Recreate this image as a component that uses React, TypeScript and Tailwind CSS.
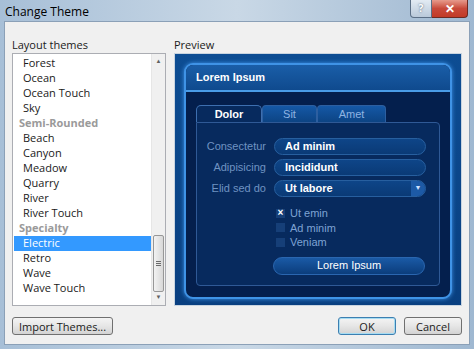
import React from "react";

interface ThemeItem {
  name: string;
  header?: boolean;
  selected?: boolean;
}

const themes: ThemeItem[] = [
  { name: "Forest" },
  { name: "Ocean" },
  { name: "Ocean Touch" },
  { name: "Sky" },
  { name: "Semi-Rounded", header: true },
  { name: "Beach" },
  { name: "Canyon" },
  { name: "Meadow" },
  { name: "Quarry" },
  { name: "River" },
  { name: "River Touch" },
  { name: "Specialty", header: true },
  { name: "Electric", selected: true },
  { name: "Retro" },
  { name: "Wave" },
  { name: "Wave Touch" },
];

const ui = { fontFamily: '"Open Sans", "Noto Sans", sans-serif' };
const mac = { fontFamily: '"Liberation Sans", Arial, sans-serif' };

const WinButton = ({ label, primary }: { label: string; primary?: boolean }) => (
  <button
    className={`h-[18px] rounded-[3px] border text-[11px] leading-none text-[#1a1a1a] bg-gradient-to-b from-[#f4f4f4] via-[#e6e6e6] to-[#d3d3d3] ${
      primary ? "border-[#3c7fb1] shadow-[inset_0_0_0_1px_#a6dcf2]" : "border-[#707070]"
    }`}
    style={ui}
  >
    {label}
  </button>
);

const Field = ({ label, value, dropdown }: { label: string; value: string; dropdown?: boolean }) => (
  <div className="flex items-center h-[17px]">
    <div className="w-[77px] text-right pr-[8px] text-[11px] text-[#6f93c2]">{label}</div>
    <div className="relative w-[152px] h-[17px] rounded-full border border-[#275f9f] bg-gradient-to-b from-[#0e4588] to-[#0a3a76] flex items-center pl-[10px] text-[11px] font-bold text-white">
      {value}
      {dropdown && (
        <div className="absolute right-0 top-0 bottom-0 w-[14px] rounded-r-full bg-[#1d5aa6] flex items-center justify-center text-[7px] text-[#cfe2ff]">
          ▼
        </div>
      )}
    </div>
  </div>
);

const Check = ({ label, checked }: { label: string; checked?: boolean }) => (
  <div className="flex items-center h-[14.5px] pl-[79px]">
    <div className="w-[9px] h-[9px] bg-[#163f78] flex items-center justify-center text-[10px] leading-none text-white font-bold">
      {checked ? "×" : ""}
    </div>
    <span className="ml-[5px] text-[11px] text-[#7ea3d4]">{label}</span>
  </div>
);

export default function App() {
  return (
    <div className="w-[474px] h-[349px] flex flex-col bg-gradient-to-r from-[#a7bfd7] via-[#c9d8e6] to-[#9fb8d1] overflow-hidden">
      {/* title bar */}
      <div className="h-[21px] flex items-start">
        <div className="pl-[5px] pt-[3px] text-[12px] text-black" style={ui}>
          Change Theme
        </div>
        <div className="ml-auto mr-[6px] flex">
          <div className="w-[22px] h-[18px] rounded-bl-[4px] border border-[#5b6f86] border-t-0 bg-gradient-to-b from-[#e3ebf3] to-[#b9c9da] flex items-center justify-center text-[10px] font-bold text-white [text-shadow:0_0_2px_#3b4d63]">
            ?
          </div>
          <div className="w-[36px] h-[18px] rounded-br-[4px] border border-[#6d2a22] border-t-0 border-l-0 bg-gradient-to-b from-[#e69a8c] via-[#c8493a] to-[#c23a26] flex items-center justify-center text-[12px] font-bold text-white">
            ✕
          </div>
        </div>
      </div>

      {/* client area */}
      <div className="mx-[4px] mb-[4px] flex-1 bg-[#f0f0f0] border border-[#8ba0b7] flex flex-col px-[7px] pt-[16px]" style={ui}>
        <div className="flex gap-[8px]">
          {/* layout themes */}
          <div className="w-[154px] flex flex-col">
            <div className="h-[13px] text-[11px] leading-[13px] text-[#1a1a1a] mb-[2px]">Layout themes</div>
            <div className="h-[253px] bg-white border border-[#abadb3] flex">
              <div className="flex-1 pt-[2px] pl-[1px]">
                {themes.map((t) => (
                  <div
                    key={t.name}
                    className={`h-[15px] flex items-center text-[11px] ${
                      t.header
                        ? "pl-[5px] font-bold text-[#9a9a9a]"
                        : t.selected
                        ? "pl-[9px] bg-[#3399ff] text-white"
                        : "pl-[9px] text-[#1a1a1a]"
                    }`}
                  >
                    {t.name}
                  </div>
                ))}
              </div>
              <div className="w-[14px] bg-[#f0f0f0] flex flex-col items-center border-l border-[#e6e6e6]">
                <div className="h-[15px] flex items-center text-[6px] text-[#606060]">▲</div>
                <div className="flex-1 w-full relative">
                  <div className="absolute left-[1px] right-[1px] top-[166px] h-[57px] rounded-[2px] border border-[#979797] bg-gradient-to-r from-[#f2f2f2] to-[#d8d8d8] flex flex-col items-center justify-center gap-[1px]">
                    <div className="w-[5px] h-px bg-[#6a6a6a]" />
                    <div className="w-[5px] h-px bg-[#6a6a6a]" />
                    <div className="w-[5px] h-px bg-[#6a6a6a]" />
                  </div>
                </div>
                <div className="h-[15px] flex items-center text-[6px] text-[#606060]">▼</div>
              </div>
            </div>
          </div>

          {/* preview */}
          <div className="flex-1 flex flex-col">
            <div className="h-[13px] text-[11px] leading-[13px] text-[#1a1a1a] mb-[2px]">Preview</div>
            <div className="h-[253px] border border-[#c8d4e0] bg-gradient-to-b from-[#0d4d93] to-[#093f80] px-[9px] pt-[9px] pb-[6px]" style={mac}>
              <div className="h-full rounded-[9px] border-2 border-[#3f93e6] bg-[#041f4d] shadow-[0_0_4px_#3f93e6] flex flex-col overflow-hidden">
                <div className="h-[27px] bg-gradient-to-b from-[#1a5ea8] to-[#0f4a8e] border-b-2 border-[#4a9ce8] flex items-center pl-[10px] text-[11px] font-bold text-white">
                  Lorem Ipsum
                </div>
                <div className="flex-1 px-[10px] pt-[13px] pb-[11px] flex flex-col">
                  <div className="flex h-[17px] text-[11px]">
                    <div className="w-[66px] rounded-t-[5px] border border-b-0 border-[#3d6fb0] bg-[#072a5e] flex items-center justify-center font-bold text-white">
                      Dolor
                    </div>
                    <div className="w-[55px] rounded-t-[4px] border border-b-0 border-[#2d5fa0] bg-gradient-to-b from-[#1558a6] to-[#0d4484] flex items-center justify-center text-[#8fb4e2]">
                      Sit
                    </div>
                    <div className="w-[69px] rounded-t-[4px] border border-b-0 border-[#2d5fa0] bg-gradient-to-b from-[#1558a6] to-[#0d4484] flex items-center justify-center text-[#8fb4e2]">
                      Amet
                    </div>
                  </div>
                  <div className="flex-1 border border-[#2f5996] rounded-b-[4px] rounded-tr-[4px] bg-[#072a5e] pt-[15px] flex flex-col">
                    <div className="flex flex-col gap-[4px]">
                      <Field label="Consectetur" value="Ad minim" />
                      <Field label="Adipisicing" value="Incididunt" />
                      <Field label="Elid sed do" value="Ut labore" dropdown />
                    </div>
                    <div className="mt-[9px]">
                      <Check label="Ut emin" checked />
                      <Check label="Ad minim" />
                      <Check label="Veniam" />
                    </div>
                    <div className="ml-[76px] mt-[7px] w-[152px] h-[18px] rounded-full border border-[#2a66b0] bg-gradient-to-b from-[#1a5aa6] to-[#0b3d7c] flex items-center justify-center text-[11px] text-white">
                      Lorem Ipsum
                    </div>
                  </div>
                </div>
              </div>
            </div>
          </div>
        </div>

        {/* buttons */}
        <div className="mt-[11px] flex">
          <div className="w-[101px] flex flex-col">
            <WinButton label="Import Themes..." />
          </div>
          <div className="ml-auto flex gap-[8px]">
            <div className="w-[58px] flex flex-col">
              <WinButton label="OK" primary />
            </div>
            <div className="w-[58px] flex flex-col">
              <WinButton label="Cancel" />
            </div>
          </div>
        </div>
      </div>
    </div>
  );
}
